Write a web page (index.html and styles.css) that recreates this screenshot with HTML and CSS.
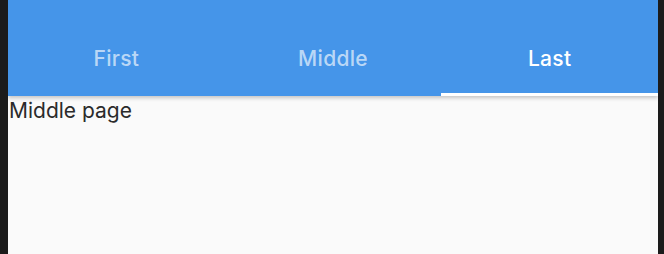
FILE: index.html
```html
<!DOCTYPE html>
<html>
<head>
<meta charset="utf-8">
<link rel="stylesheet" href="styles.css">
</head>
<body>
<div class="app">
  <header class="appbar">
    <nav class="tabs">
      <div class="tab">First</div>
      <div class="tab">Middle</div>
      <div class="tab active">Last</div>
    </nav>
  </header>
  <main class="page">Middle page</main>
</div>
</body>
</html>
```
FILE: styles.css
```css
html, body {
  margin: 0;
  padding: 0;
  height: 100%;
  background: #1b1b1b;
}
.app {
  margin: 0 6px 0 8px;
  height: 254px;
  background: #fafafa;
  display: flex;
  flex-direction: column;
  font-family: Inter, "Noto Sans", sans-serif;
  overflow: hidden;
}
.appbar {
  background: #4595e9;
  height: 96px;
  display: flex;
  flex-direction: column;
  justify-content: flex-end;
  box-shadow: 0 2px 4px rgba(0,0,0,0.22);
  position: relative;
  z-index: 1;
}
.tabs {
  display: flex;
  height: 78px;
}
.tab {
  flex: 1;
  display: flex;
  align-items: center;
  justify-content: center;
  font-size: 21px;
  letter-spacing: 0.3px;
  font-weight: 500;
  color: rgba(255,255,255,0.65);
  box-sizing: border-box;
  padding-top: 6px;
  border-bottom: 3px solid transparent;
}
.tab.active {
  color: #ffffff;
  border-bottom-color: #ffffff;
}
.page {
  padding: 2px 0 0 1px;
  font-size: 21px;
  color: #2b2b2b;
}
```
